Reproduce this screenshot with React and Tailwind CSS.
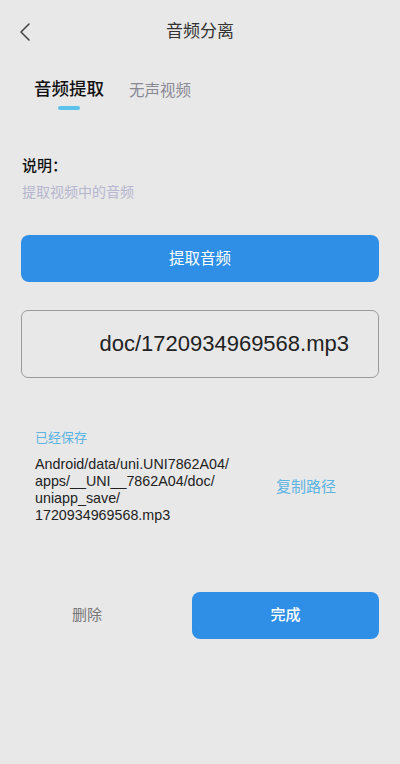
export default function App() {
  return (
    <div
      className="w-[400px] h-[764px] bg-[#e8e8e8] text-[#222]"
      style={{ fontFamily: '"Liberation Sans", "Noto Sans CJK SC", sans-serif' }}
    >
      {/* 顶部栏 */}
      <div className="relative h-[62px] flex items-center justify-center">
        <svg
          className="absolute left-[18px] top-[22px]"
          width="14"
          height="20"
          viewBox="0 0 14 20"
          fill="none"
          stroke="#444"
          strokeWidth="1.6"
          strokeLinecap="round"
          strokeLinejoin="round"
        >
          <path d="M11 2 L3 10 L11 18" />
        </svg>
        <span className="text-[17px] text-[#333] leading-none">音频分离</span>
      </div>

      {/* 标签 */}
      <div className="flex items-end pl-[34px] gap-[25px] h-[48px]">
        <div className="flex flex-col items-center">
          <span className="text-[17.5px] font-medium text-[#111] leading-none">音频提取</span>
          <div className="mt-[8px] w-[22px] h-[4px] rounded-full bg-[#5bc2ec]" />
        </div>
        <span className="text-[15.5px] text-[#8a8a95] leading-none mb-[12px]">无声视频</span>
      </div>

      {/* 说明 */}
      <div className="px-[22px] mt-[48px]">
        <div className="text-[15px] font-medium text-[#111] leading-none">说明：</div>
        <div className="text-[14px] text-[#b6b6ce] leading-none mt-[12px]">提取视频中的音频</div>
      </div>

      <div className="px-[21px] mt-[36px]">
        <button className="w-full h-[47px] rounded-[8px] bg-[#2f8fe7] text-white text-[15.5px]">
          提取音频
        </button>

        <div className="mt-[28px] h-[68px] rounded-[7px] border border-[#9a9a9a] flex items-center justify-end pr-[29px]">
          <span className="text-[22px] text-[#222] leading-none">doc/1720934969568.mp3</span>
        </div>
      </div>

      {/* 已保存 */}
      <div className="px-[35px] mt-[53px]">
        <div className="text-[13px] text-[#5cb4e2] leading-none">已经保存</div>
        <div className="flex items-center mt-[12px]">
          <div className="w-[210px] text-[14.3px] leading-[17px] text-[#222] whitespace-nowrap">
            Android/data/uni.UNI7862A04/
            <br />
            apps/__UNI__7862A04/doc/
            <br />
            uniapp_save/
            <br />
            1720934969568.mp3
          </div>
          <span className="ml-[31px] mb-[6px] text-[15px] text-[#5cb4e2]">复制路径</span>
        </div>
      </div>

      {/* 底部按钮 */}
      <div className="flex items-center px-[21px] mt-[68px]">
        <div className="w-[132px] text-center text-[15px] text-[#777]">删除</div>
        <button className="ml-[39px] flex-1 h-[47px] rounded-[8px] bg-[#2f8fe7] text-white text-[15px] font-medium">
          完成
        </button>
      </div>
    </div>
  );
}
